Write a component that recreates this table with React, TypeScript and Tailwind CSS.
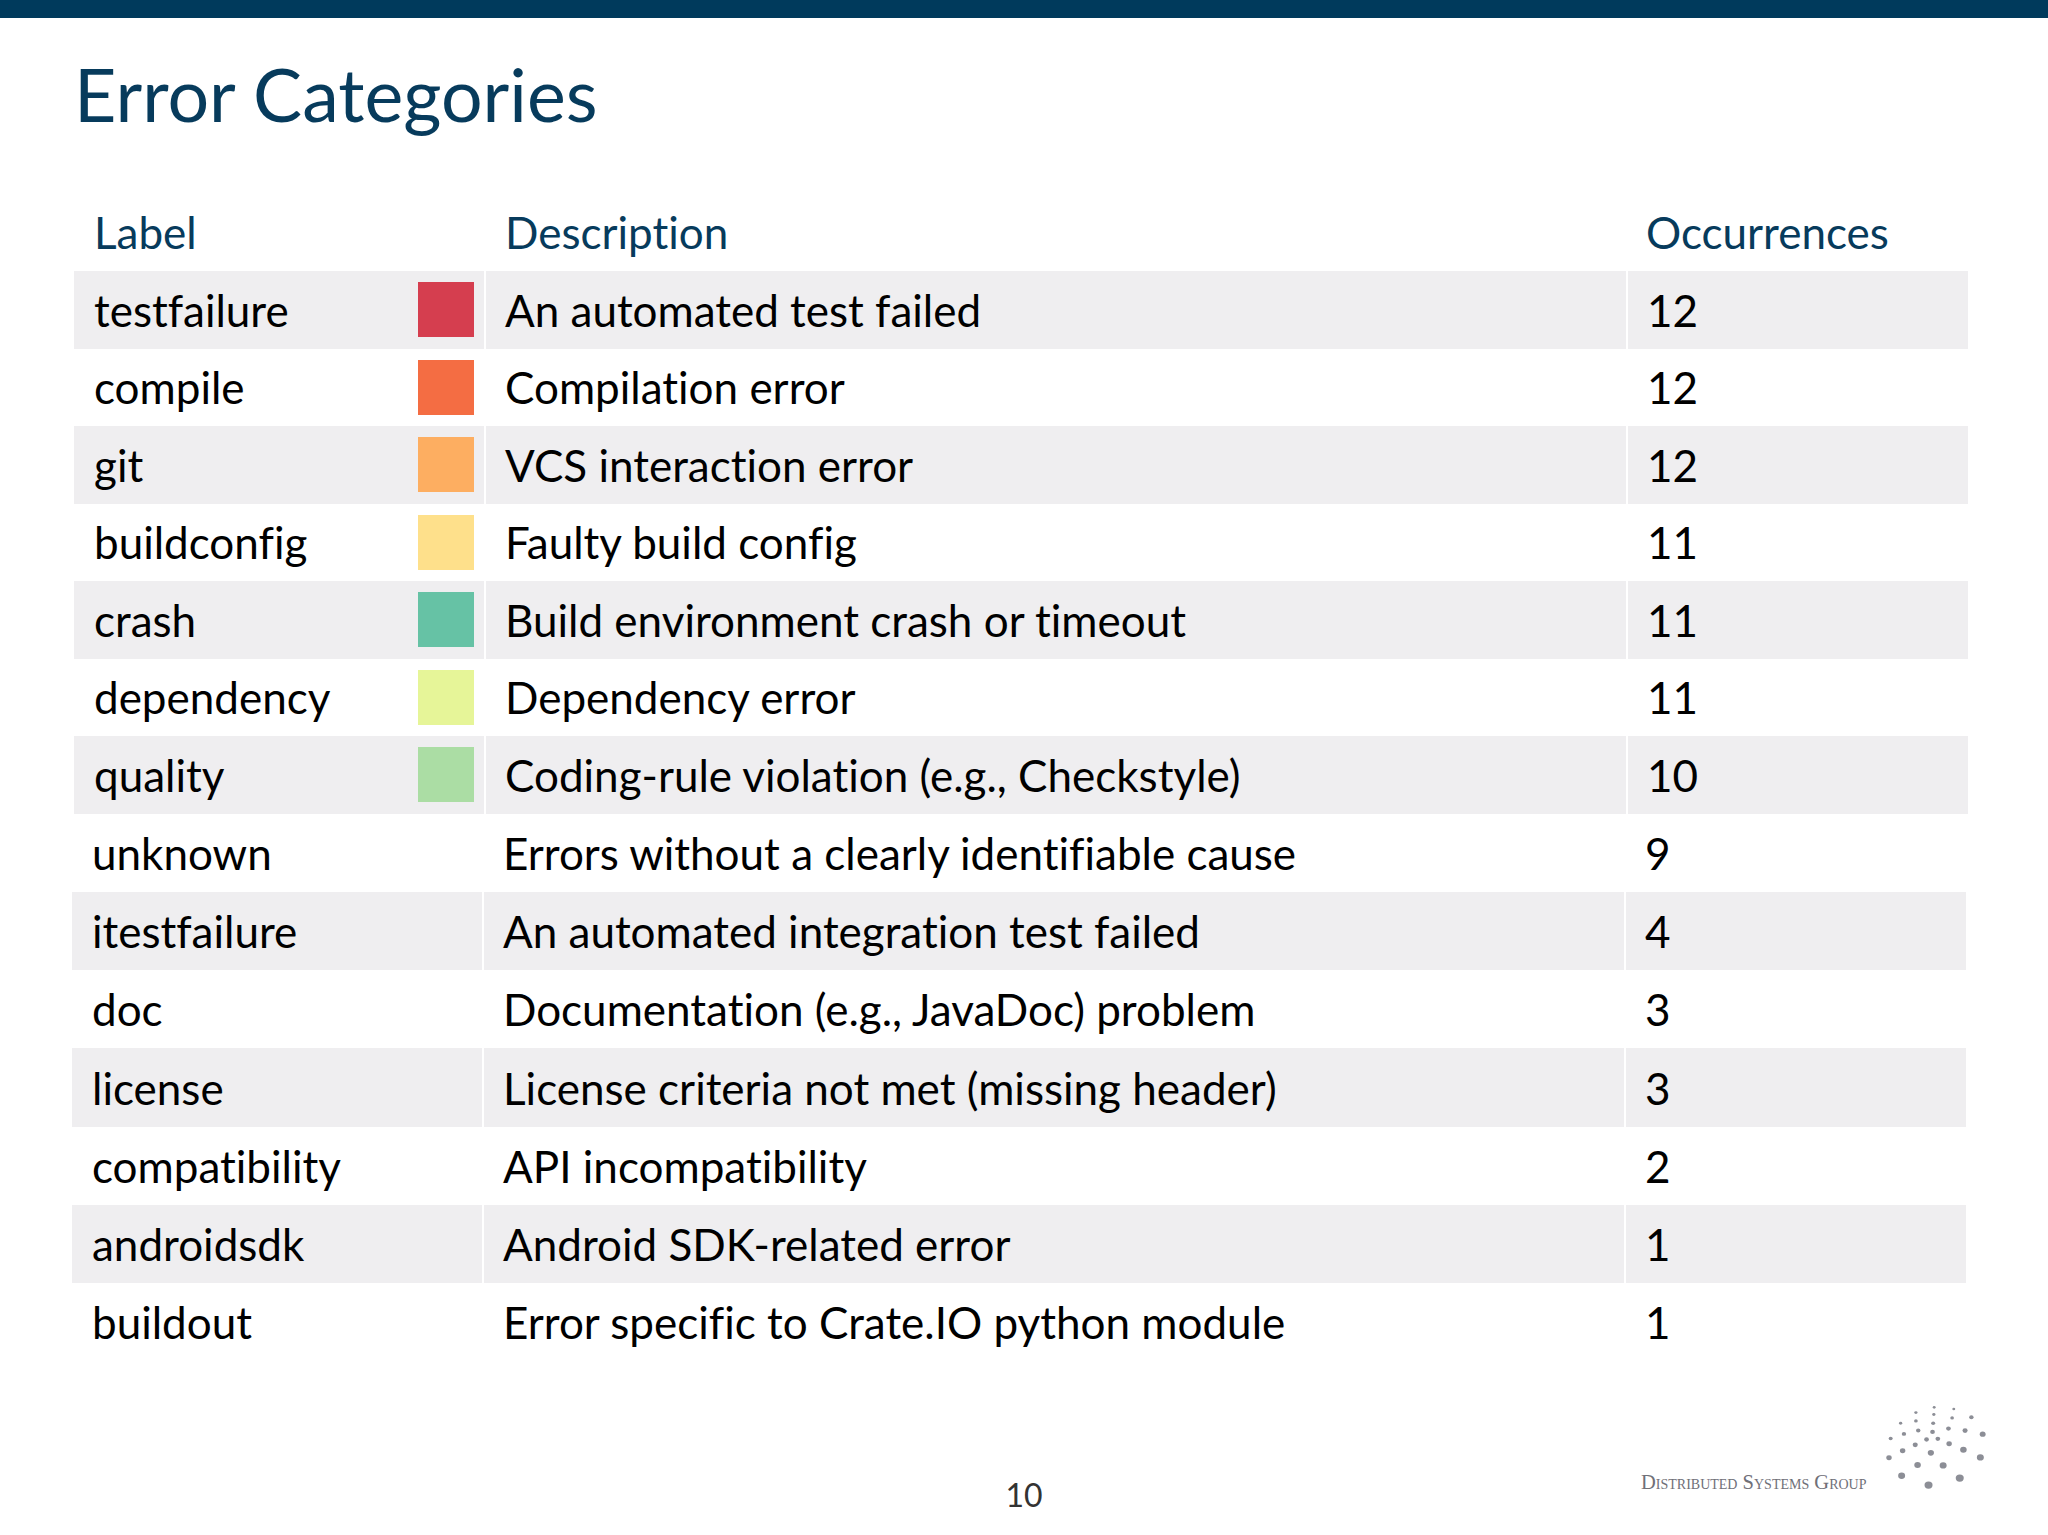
import React from 'react'

type Row = { label: string; color?: string; desc: string; count: number }

const topRows: Row[] = [
  { label: 'testfailure', color: 'bg-[#d53e4f]', desc: 'An automated test failed', count: 12 },
  { label: 'compile', color: 'bg-[#f46d43]', desc: 'Compilation error', count: 12 },
  { label: 'git', color: 'bg-[#fdae61]', desc: 'VCS interaction error', count: 12 },
  { label: 'buildconfig', color: 'bg-[#fee08b]', desc: 'Faulty build config', count: 11 },
  { label: 'crash', color: 'bg-[#66c2a5]', desc: 'Build environment crash or timeout', count: 11 },
  { label: 'dependency', color: 'bg-[#e6f598]', desc: 'Dependency error', count: 11 },
  { label: 'quality', color: 'bg-[#abdda4]', desc: 'Coding-rule violation (e.g., Checkstyle)', count: 10 },
]

const bottomRows: Row[] = [
  { label: 'unknown', desc: 'Errors without a clearly identifiable cause', count: 9 },
  { label: 'itestfailure', desc: 'An automated integration test failed', count: 4 },
  { label: 'doc', desc: 'Documentation (e.g., JavaDoc) problem', count: 3 },
  { label: 'license', desc: 'License criteria not met (missing header)', count: 3 },
  { label: 'compatibility', desc: 'API incompatibility', count: 2 },
  { label: 'androidsdk', desc: 'Android SDK-related error', count: 1 },
  { label: 'buildout', desc: 'Error specific to Crate.IO python module', count: 1 },
]

const dots: [number, number, number][] = [
  [1003, 82, 4], [1062, 87, 4], [948, 98, 4.5], [1002, 104, 4.5], [1057, 114, 5], [1115, 112, 6],
  [902, 130, 4.5], [948, 123, 5], [1000, 130, 5.5], [912, 162, 6], [955, 152, 6], [998, 156, 6.5],
  [1046, 146, 6.5], [1096, 152, 7], [1149, 163, 8], [872, 176, 5.5], [980, 179, 6.5], [1014, 177, 6.5],
  [1048, 192, 7.5], [946, 195, 7], [908, 213, 7.5], [993, 219, 8.5], [1091, 210, 9], [1142, 233, 9.5],
  [867, 234, 7.5], [953, 256, 9], [1030, 257, 9.5], [905, 288, 9.5], [1080, 295, 11], [986, 316, 11],
]

// striped: first row grey when `greyFirst`, the lower block continues the stripes
const Table = ({ rows, h, shift, greyFirst }: { rows: Row[]; h: string; shift: string; greyFirst: boolean }) => (
  <div className={`flex flex-col ${shift}`}>
    {rows.map((r, i) => {
      const grey = (i % 2 === 0) === greyFirst
      const bg = grey ? 'bg-[#efeef0]' : 'bg-white'
      return (
        <div key={r.label} className={`grid grid-cols-[410px_1140px_340px] gap-x-[2px] ${h}`}>
          <div className={`flex items-center justify-between pl-[20px] pr-[10px] ${bg}`}>
            <span>{r.label}</span>
            {r.color && <span className={`w-[56px] h-[55px] ${r.color}`} />}
          </div>
          <div className={`flex items-center pl-[19px] ${bg}`}>{r.desc}</div>
          <div className={`flex items-center pl-[19px] ${bg}`}>{r.count}</div>
        </div>
      )
    })}
  </div>
)

const App = () => {
  return (
    <div className="w-[2048px] h-[1535px] bg-white flex flex-col font-['Lato',sans-serif] text-black [font-variant-ligatures:none]">
      <div className="h-[18px] bg-[#003a5c]" />

      <h1 className="pl-[74px] pt-[31px] text-[73.5px] leading-[90px] text-[#073b5c]">Error Categories</h1>

      <div className="pl-[74px] pt-[68px]">
        <div className="grid grid-cols-[410px_1140px_340px] gap-x-[2px] text-[44px] text-[#073b5c] leading-[50px] pb-[14px]">
          <div className="pl-[20px]">Label</div>
          <div className="pl-[19px]">Description</div>
          <div className="pl-[18px]">Occurrences</div>
        </div>

        <div className="text-[44px] leading-none">
          <Table rows={topRows} h="h-[77.5px]" shift="" greyFirst />
          <Table rows={bottomRows} h="h-[78.3px]" shift="-ml-[2px]" greyFirst={false} />
        </div>
      </div>

      <div className="relative mt-auto h-[110px] flex justify-center">
        <span className="pt-[54px] text-[32px] leading-none text-[#333333]">10</span>

        <span className="absolute left-[1641px] top-[47px] font-['Liberation_Serif',serif] text-[20.5px] leading-none text-[#707078] [font-variant:small-caps]">
          Distributed Systems Group
        </span>
        <svg viewBox="840 60 340 280" className="absolute left-[1880px] top-[-25px] w-[113px] h-[93px]">
          {dots.map(([x, y, r], i) => (
            <ellipse key={i} cx={x} cy={y} rx={r * 1.1} ry={r} fill="#8c8e96" />
          ))}
        </svg>
      </div>
    </div>
  )
}

export default App
